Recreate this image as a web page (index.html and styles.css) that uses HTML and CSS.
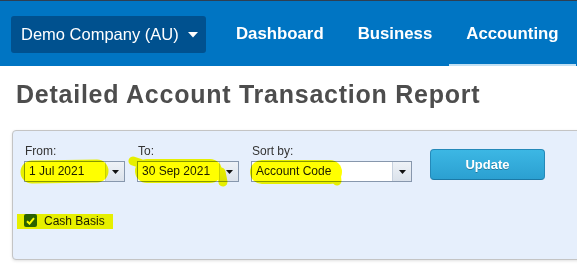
FILE: index.html
```html
<!DOCTYPE html>
<html lang="en">
<head>
<meta charset="utf-8">
<title>Detailed Account Transaction Report</title>
<link rel="stylesheet" href="styles.css">
</head>
<body>
<header class="topbar">
  <button class="org-switch" type="button">
    <span>Demo Company (AU)</span>
    <svg class="org-caret" width="10" height="6" viewBox="0 0 10 6"><path d="M0 0 H10 L5 5.5 Z" fill="#fff"/></svg>
  </button>
  <nav class="tabs">
    <a class="tab">Dashboard</a>
    <a class="tab">Business</a>
    <a class="tab tab-active">Accounting</a>
  </nav>
</header>

<h1 class="page-title">Detailed Account Transaction Report</h1>

<section class="filters">
  <div class="filter-row">
    <div class="field field-from">
      <label class="field-label">From:</label>
      <div class="combo">
        <span class="combo-value">1 Jul 2021</span>
        <span class="combo-btn"><svg width="7" height="4" viewBox="0 0 7 4"><path d="M0 0 H7 L3.5 4 Z" fill="#111"/></svg></span>
      </div>
    </div>
    <div class="field field-to">
      <label class="field-label">To:</label>
      <div class="combo">
        <span class="combo-value">30 Sep 2021</span>
        <span class="combo-btn"><svg width="7" height="4" viewBox="0 0 7 4"><path d="M0 0 H7 L3.5 4 Z" fill="#111"/></svg></span>
      </div>
    </div>
    <div class="field field-sort">
      <label class="field-label">Sort by:</label>
      <div class="combo">
        <span class="combo-value">Account Code</span>
        <span class="combo-btn"><svg width="7" height="4" viewBox="0 0 7 4"><path d="M0 0 H7 L3.5 4 Z" fill="#111"/></svg></span>
      </div>
    </div>
    <button class="update-btn" type="button">Update</button>
  </div>
  <div class="check-row">
    <span class="checkbox"><svg width="9" height="8" viewBox="0 0 9 8"><path d="M1 4.2 L3.5 6.6 L8 1.2" fill="none" stroke="#fff" stroke-width="2"/></svg></span>
    <span class="check-label">Cash Basis</span>
  </div>
</section>

<svg class="marker" width="577" height="273" viewBox="0 0 577 273" aria-hidden="true">
  <g fill="none" stroke="#ffff00" stroke-linecap="round" stroke-linejoin="round">
    <path d="M32 172 L97 171" stroke-width="23"/>
    <path d="M147 171 L210 171" stroke-width="24"/>
    <path d="M133 161 L148 166" stroke-width="9"/>
    <path d="M221 172 L223 182" stroke-width="9"/>
    <path d="M262 172 L330 172" stroke-width="24"/>
    <path d="M336 172 L337 181" stroke-width="9"/>
  </g>
  <rect x="17" y="214" width="96" height="15" fill="#ffff00"/>
</svg>
</body>
</html>
```
FILE: styles.css
```css
html, body {
  margin: 0;
  padding: 0;
  overflow: hidden;
}
body {
  font-family: "Liberation Sans", Arial, sans-serif;
  background: #fff;
  position: relative;
  width: 577px;
  height: 273px;
}

.topbar {
  height: 65px;
  border-top: 1px solid #2e3f52;
  background: #0075c3;
  display: flex;
  align-items: stretch;
}
.org-switch {
  align-self: center;
  margin-left: 11px;
  height: 37px;
  width: 195px;
  box-sizing: border-box;
  padding: 0 0 0 10px;
  border: none;
  border-radius: 3px;
  background: #00518f;
  color: #fff;
  font-family: "Liberation Sans", Arial, sans-serif;
  font-size: 16.5px;
  display: flex;
  align-items: center;
  gap: 9px;
  margin-top: 1px;
}
.org-caret {
  margin-top: 1px;
}
.tabs {
  display: flex;
  margin-left: 13px;
}
.tab {
  display: flex;
  align-items: center;
  padding: 0 17px;
  color: #fff;
  font-weight: bold;
  font-size: 16.8px;
  box-sizing: border-box;
  border-bottom: 2px solid transparent;
  padding-top: 2px;
}
.tab-active {
  border-bottom-color: #c2e0f3;
}

.page-title {
  margin: 14px 0 0 16px;
  font-size: 25px;
  line-height: 28px;
  letter-spacing: 0.75px;
  font-weight: bold;
  color: #4d4d4d;
}

.filters {
  margin: 22px 0 0 12px;
  width: 620px;
  box-sizing: border-box;
  border: 1px solid #c4c4c4;
  border-radius: 4px;
  background: #e6effc;
  box-shadow: 0 1px 3px rgba(0, 0, 0, 0.12);
  padding: 13px 11px 31px;
  font-size: 12px;
  color: #222;
}
.filter-row {
  display: flex;
  align-items: flex-start;
}
.field {
  display: flex;
  flex-direction: column;
  margin-right: 12px;
}
.field-label {
  line-height: 15px;
  margin: 0 0 2px 1px;
  color: #333;
}
.field-from .combo { width: 101px; }
.field-to .combo { width: 102px; }
.field-sort .combo { width: 161px; }
.field-sort { margin-right: 18px; }
.combo {
  height: 21px;
  box-sizing: border-box;
  border: 1px solid #8797ad;
  background: #fff;
  display: flex;
}
.combo-value {
  flex: 1;
  padding-left: 4px;
  line-height: 19px;
  color: #1c1c1c;
  white-space: nowrap;
}
.combo-btn {
  width: 18px;
  border-left: 1px solid #c7d1de;
  background: linear-gradient(#eef2f7, #dbe2eb);
  display: flex;
  align-items: center;
  justify-content: center;
}
.update-btn {
  margin-top: 5px;
  width: 115px;
  height: 31px;
  border: 1px solid #2489b9;
  border-bottom-color: #1b79a6;
  border-radius: 4px;
  background: linear-gradient(#3cb7e4, #2ba0d1);
  color: #fff;
  font-family: "Liberation Sans", Arial, sans-serif;
  font-weight: bold;
  font-size: 13px;
  text-shadow: 0 1px 0 rgba(0, 0, 0, 0.25);
}
.check-row {
  margin-top: 31px;
  height: 15px;
  display: flex;
  align-items: center;
  gap: 7px;
}
.checkbox {
  width: 13px;
  height: 13px;
  box-sizing: border-box;
  border-radius: 2px;
  background: #2b62c4;
  display: flex;
  align-items: center;
  justify-content: center;
}
.check-label {
  color: #1c1c1c;
}

.marker {
  position: absolute;
  left: 0;
  top: 0;
  pointer-events: none;
  mix-blend-mode: multiply;
}
```
